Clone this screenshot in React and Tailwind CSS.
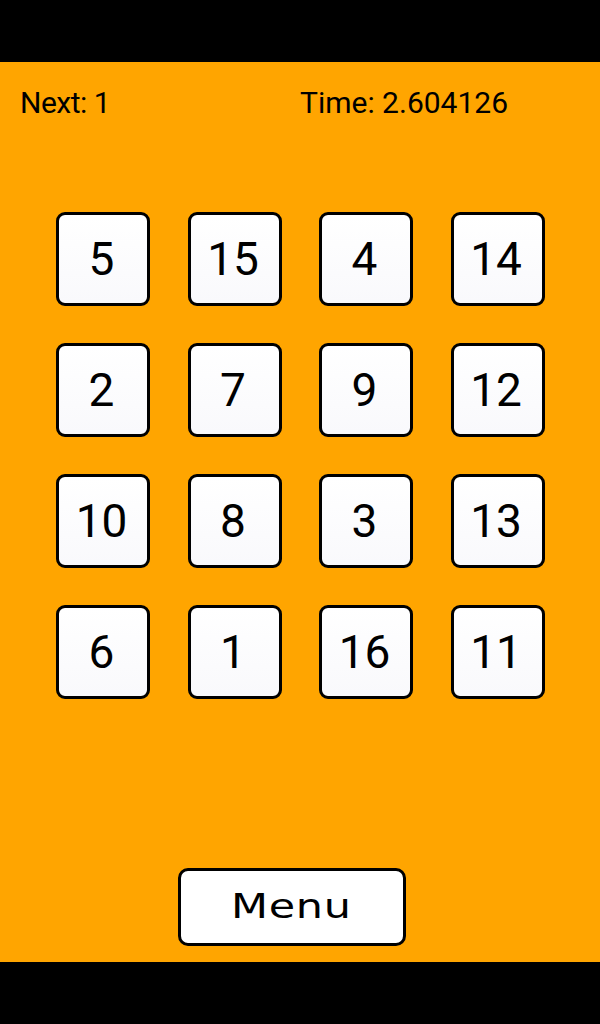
const TILES = [5, 15, 4, 14, 2, 7, 9, 12, 10, 8, 3, 13, 6, 1, 16, 11]

function Tile({ n }) {
  return (
    <button className="w-[94px] h-[94px] rounded-[9px] border-[3px] border-black bg-gradient-to-b from-white to-[#f9f9fc] flex items-center justify-center pr-[3px] text-[46px] leading-none text-black font-['Roboto',sans-serif]">
      {n}
    </button>
  )
}

export default function App() {
  return (
    <div className="w-[600px] h-[1024px] flex flex-col bg-black font-['Roboto',sans-serif]">
      {/* status bar */}
      <div className="h-[62px] bg-black"></div>

      <div className="flex-1 bg-[#ffa500] flex flex-col">
        {/* header */}
        <div className="grid grid-cols-2 px-5 pt-[24px] text-[30px] leading-[34px] text-black">
          <span className="tracking-[-0.5px]">Next: 1</span>
          <span>Time: 2.604126</span>
        </div>

        {/* board */}
        <div className="mt-[92px] ml-[56px] grid grid-cols-[repeat(4,94px)] gap-x-[37.5px] gap-y-[37px]">
          {TILES.map((n) => (
            <Tile key={n} n={n} />
          ))}
        </div>

        <div className="flex-1"></div>

        <button className="ml-[178px] mb-[16px] w-[228px] h-[78px] rounded-[10px] border-[3px] border-black bg-white flex items-center justify-center pr-[2px] text-black">
          <span className="inline-block scale-x-[1.3] text-[33px] tracking-[0.5px] font-['DejaVu_Sans',sans-serif]">Menu</span>
        </button>
      </div>

      {/* nav bar */}
      <div className="h-[62px] bg-black"></div>
    </div>
  )
}
